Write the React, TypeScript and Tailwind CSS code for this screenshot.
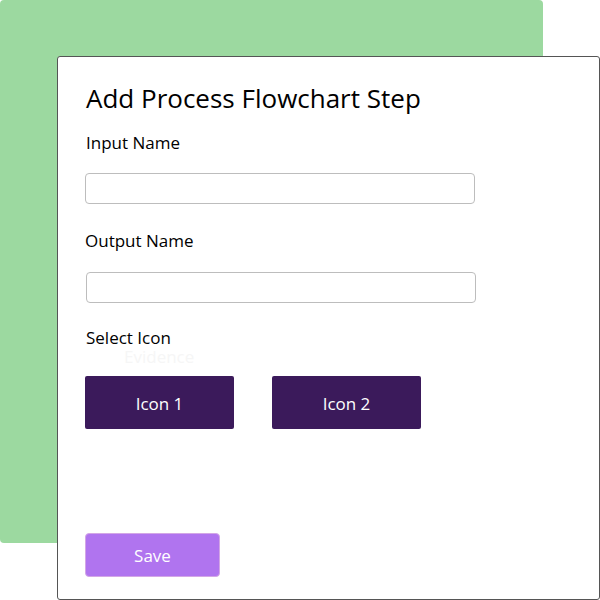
export default function App() {
  return (
    <div className="relative h-[600px] w-[600px] overflow-hidden bg-white font-['Open_Sans',_'Noto_Sans',_sans-serif] text-black">
      <div className="h-[543px] w-[543px] rounded-[4px] bg-[#9cd9a0]" />

      <section className="absolute left-[57px] top-[56px] flex h-[544px] w-[543px] flex-col rounded-[3px] border border-[#555] bg-white pl-[28px] pt-[24px]">
        <h1 className="text-[26px] leading-[34px]">Add Process Flowchart Step</h1>

        <label className="mt-[16px] text-[17px] leading-[24px]">Input Name</label>
        <input type="text" className="mt-[18px] -ml-px h-[31px] w-[390px] rounded-[4px] border border-[#bdbdbd] bg-white px-2 text-[15px] outline-none" />

        <label className="mt-[25px] -ml-px text-[17px] leading-[24px]">Output Name</label>
        <input type="text" className="mt-[19px] h-[31px] w-[390px] rounded-[4px] border border-[#bdbdbd] bg-white px-2 text-[15px] outline-none" />

        <div className="relative mt-[25px]">
          <span className="block text-[17px] leading-[20px]">Select Icon</span>
          <span className="absolute left-[38px] top-[20px] text-[17px] leading-[17px] text-[#f6f6f6]">Evidence</span>
        </div>

        <div className="mt-[28px] -ml-px flex gap-[38px]">
          <button type="button" className="h-[53px] w-[149px] rounded-[2px] bg-[#3b1a5b] pt-[3px] text-[17px] text-white">Icon 1</button>
          <button type="button" className="h-[53px] w-[149px] rounded-[2px] bg-[#3b1a5b] pt-[3px] text-[17px] text-white">Icon 2</button>
        </div>

        <button type="button" className="mt-[104px] -ml-px h-[44px] w-[135px] rounded-[4px] border border-[#d3a6e6] bg-[#b074ef] pt-[2px] text-[17px] text-white">Save</button>
      </section>
    </div>
  );
}
